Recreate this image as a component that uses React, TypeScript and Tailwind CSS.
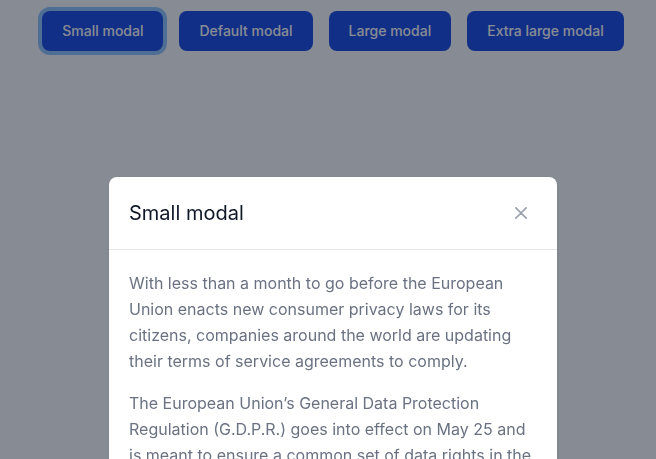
import React from "react";

export default function App() {
  const buttons = ["Small modal", "Default modal", "Large modal", "Extra large modal"];
  return (
    <div className="min-h-screen bg-white" style={{ fontFamily: "Inter, 'Noto Sans', sans-serif" }}>
      <div className="flex justify-center gap-4 pt-[11px] pl-[10px]">
        {buttons.map((b, i) => (
          <button
            key={b}
            className={
              "rounded-lg bg-blue-700 px-5 py-2.5 text-sm font-medium text-white " +
              (i === 0 ? "ring-4 ring-blue-300" : "")
            }
          >
            {b}
          </button>
        ))}
      </div>

      <div className="fixed inset-0 overflow-hidden bg-gray-900/50">
        <div className="flex justify-center pl-[10px] pt-[177px]">
          <div className="w-[448px] rounded-lg bg-white shadow-sm">
            <div className="flex items-center justify-between border-b border-gray-200 p-5">
              <h3 className="text-xl font-normal text-gray-900">Small modal</h3>
              <button className="inline-flex h-8 w-8 items-center justify-center rounded-lg text-gray-400">
                <svg className="h-3 w-3" viewBox="0 0 14 14" fill="none">
                  <path
                    d="m1 1 6 6m0 0 6 6M7 7l6-6M7 7l-6 6"
                    stroke="currentColor"
                    strokeLinecap="round"
                    strokeLinejoin="round"
                    strokeWidth="2"
                  />
                </svg>
              </button>
            </div>
            <div className="space-y-4 p-5">
              <p className="text-base leading-relaxed text-gray-500">
                With less than a month to go before the European Union enacts new consumer privacy laws for its
                citizens, companies around the world are updating their terms of service agreements to comply.
              </p>
              <p className="text-base leading-relaxed text-gray-500">
                The European Union’s General Data Protection Regulation (G.D.P.R.) goes into effect on May 25 and is
                meant to ensure a common set of data rights in the European Union. It requires organizations to notify
                users as soon as possible of high-risk data breaches that could personally affect them.
              </p>
            </div>
            <div className="flex items-center border-t border-gray-200 p-5">
              <button className="rounded-lg bg-blue-700 px-5 py-2.5 text-sm font-medium text-white">I accept</button>
              <button className="ms-3 rounded-lg border border-gray-200 bg-white px-5 py-2.5 text-sm font-medium text-gray-900">
                Decline
              </button>
            </div>
          </div>
        </div>
      </div>
    </div>
  );
}
